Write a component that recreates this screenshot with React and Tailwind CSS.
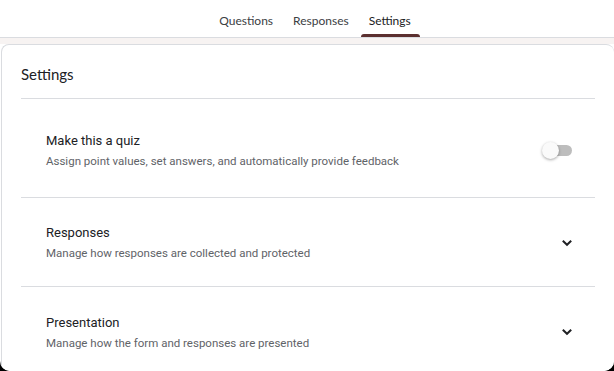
import React from "react";

const Chevron = () => (
  <svg width="12" height="8" viewBox="0 0 12 8" className="block">
    <path d="M1.8 1.8 L6 5.8 L10.2 1.8" fill="none" stroke="#202124" strokeWidth="2" />
  </svg>
);

function Row({ title, subtitle, right, className }) {
  return (
    <div className={"flex items-center pl-[25px] pr-[23px] shrink-0 " + className}>
      <div className="flex-1 flex flex-col">
        <div className="text-[13px] leading-[16px] text-[#202124]" style={{ fontFamily: "Roboto, sans-serif" }}>{title}</div>
        <div className="mt-[5px] text-[11.5px] leading-[14px] text-[#5f6368]" style={{ fontFamily: "Roboto, sans-serif" }}>{subtitle}</div>
      </div>
      {right}
    </div>
  );
}

export default function App() {
  return (
    <div className="w-[614px] h-[371px] bg-black overflow-hidden">
      <div className="w-full h-full bg-white rounded-b-[10px] overflow-hidden flex flex-col">
        <div className="h-[38px] shrink-0 border-b border-[#dadce0] flex justify-center items-stretch bg-white" style={{ fontFamily: "Lato, sans-serif" }}>
          <div className="flex items-stretch ml-[16px] text-[12px] text-[#3c4043]">
            <div className="px-[10px] pt-[5px] flex items-center">Questions</div>
            <div className="px-[10px] pt-[5px] flex items-center">Responses</div>
            <div className="relative px-[10px] pt-[5px] flex items-center text-[#202124]">
              Settings
              <div className="absolute left-[2px] right-[1px] bottom-[0px] h-[3px] bg-[#5b2f2f] rounded-t-[3px]"></div>
            </div>
          </div>
        </div>
        <div className="h-[6px] shrink-0 bg-[#f7f3f2]"></div>
        <div className="flex-1 bg-white border-l border-t border-[#dadce0] rounded-tl-[8px] rounded-tr-[8px] ml-[1px]">
          <div className="mx-[19px] flex flex-col">
            <div className="h-[54px] shrink-0 border-b border-[#dadce0] flex items-center pt-[6px] text-[15px] text-[#202124]" style={{ fontFamily: "Lato, sans-serif" }}>
              Settings
            </div>
            <Row
              className="h-[99px] pt-[5px] border-b border-[#dadce0]"
              title="Make this a quiz"
              subtitle="Assign point values, set answers, and automatically provide feedback"
              right={
                <div className="relative w-[30px] h-[18px] flex items-center">
                  <div className="absolute right-[0px] w-[24px] h-[11px] rounded-full bg-[#bdbdbd]"></div>
                  <div className="absolute left-[0px] w-[17px] h-[17px] rounded-full bg-[#fafafa] shadow-[0_1px_3px_rgba(0,0,0,0.35)]"></div>
                </div>
              }
            />
            <Row className="h-[89px] pt-[1px] border-b border-[#dadce0]" title="Responses" subtitle="Manage how responses are collected and protected" right={<div className="mr-[-1px]"><Chevron /></div>} />
            <Row className="h-[89px] pt-[1px]" title="Presentation" subtitle="Manage how the form and responses are presented" right={<div className="mr-[-1px]"><Chevron /></div>} />
          </div>
        </div>
      </div>
    </div>
  );
}
